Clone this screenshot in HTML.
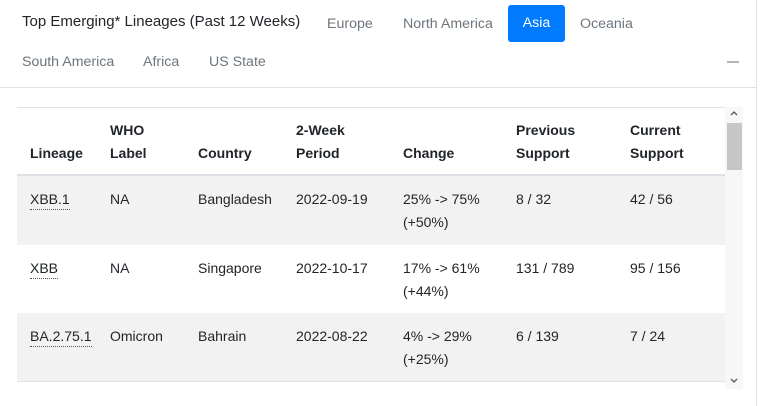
<!DOCTYPE html>
<html><head><meta charset="utf-8"><style>
*{margin:0;padding:0;box-sizing:border-box}
body{width:768px;height:406px;overflow:hidden;background:#fff;font-family:"Liberation Sans",sans-serif;color:#212529;position:relative;font-size:14px}
.a{position:absolute;white-space:nowrap}
.tab{color:#6c757d;font-size:14.2px}
.h{font-weight:bold;font-size:14px;line-height:23px}
.c{line-height:23px}
.u{border-bottom:1px dotted #555;padding-bottom:2px}
</style></head><body>
<div class="a" style="left:756px;top:0;width:1px;height:406px;background:#dee2e6"></div>
<div class="a" style="left:0;top:87px;width:757px;height:1px;background:#dee2e6"></div>
<div class="a" style="left:22px;top:13px;font-size:15px">Top Emerging* Lineages (Past 12 Weeks)</div>
<div class="a tab" style="left:327px;top:16px">Europe</div>
<div class="a tab" style="left:403px;top:16px">North America</div>
<div class="a" style="left:508px;top:5px;width:57px;height:37px;background:#007bff;border-radius:3px;color:#fff;text-align:center;line-height:37px;font-size:14.2px">Asia</div>
<div class="a tab" style="left:580px;top:16px">Oceania</div>
<div class="a tab" style="left:22px;top:54px">South America</div>
<div class="a tab" style="left:143px;top:54px">Africa</div>
<div class="a tab" style="left:209px;top:54px">US State</div>
<div class="a" style="left:727px;top:61px;width:12px;height:2px;background:#adb5bd"></div>

<div class="a" style="left:17px;top:107px;width:708px;height:1px;background:#dee2e6"></div>
<div class="a" style="left:17px;top:174px;width:708px;height:2px;background:#dee2e6"></div>
<div class="a" style="left:17px;top:176px;width:708px;height:69px;background:#f2f2f2"></div>
<div class="a" style="left:17px;top:313px;width:708px;height:69px;background:#f2f2f2;border-bottom:1px solid #e4e4e4"></div>
<div class="a" style="left:725px;top:107px;width:18px;height:282px;background:#f7f7f7"></div>
<div class="a" style="left:727px;top:123px;width:15px;height:47px;background:#c6c6c6"></div>
<svg class="a" style="left:729px;top:109px" width="10" height="8"><path d="M2 6 L5 3 L8 6" fill="none" stroke="#555" stroke-width="1.3"/></svg>
<svg class="a" style="left:729px;top:377px" width="10" height="8"><path d="M2 2 L5 5 L8 2" fill="none" stroke="#555" stroke-width="1.3"/></svg>

<div class="a h" style="left:30px;top:142px">Lineage</div>
<div class="a h" style="left:110px;top:119px">WHO<br>Label</div>
<div class="a h" style="left:198px;top:142px">Country</div>
<div class="a h" style="left:296px;top:119px">2-Week<br>Period</div>
<div class="a h" style="left:403px;top:142px">Change</div>
<div class="a h" style="left:516px;top:119px">Previous<br>Support</div>
<div class="a h" style="left:630px;top:119px">Current<br>Support</div>

<div class="a c" style="left:30px;top:188px"><span class="u">XBB.1</span></div>
<div class="a c" style="left:110px;top:188px">NA</div>
<div class="a c" style="left:198px;top:188px">Bangladesh</div>
<div class="a c" style="left:296px;top:188px">2022-09-19</div>
<div class="a c" style="left:403px;top:188px">25% -&gt; 75%<br>(+50%)</div>
<div class="a c" style="left:516px;top:188px">8 / 32</div>
<div class="a c" style="left:630px;top:188px">42 / 56</div>

<div class="a c" style="left:30px;top:257px"><span class="u">XBB</span></div>
<div class="a c" style="left:110px;top:257px">NA</div>
<div class="a c" style="left:198px;top:257px">Singapore</div>
<div class="a c" style="left:296px;top:257px">2022-10-17</div>
<div class="a c" style="left:403px;top:257px">17% -&gt; 61%<br>(+44%)</div>
<div class="a c" style="left:516px;top:257px">131 / 789</div>
<div class="a c" style="left:630px;top:257px">95 / 156</div>

<div class="a c" style="left:30px;top:325px"><span class="u">BA.2.75.1</span></div>
<div class="a c" style="left:110px;top:325px">Omicron</div>
<div class="a c" style="left:198px;top:325px">Bahrain</div>
<div class="a c" style="left:296px;top:325px">2022-08-22</div>
<div class="a c" style="left:403px;top:325px">4% -&gt; 29%<br>(+25%)</div>
<div class="a c" style="left:516px;top:325px">6 / 139</div>
<div class="a c" style="left:630px;top:325px">7 / 24</div>
</body></html>
